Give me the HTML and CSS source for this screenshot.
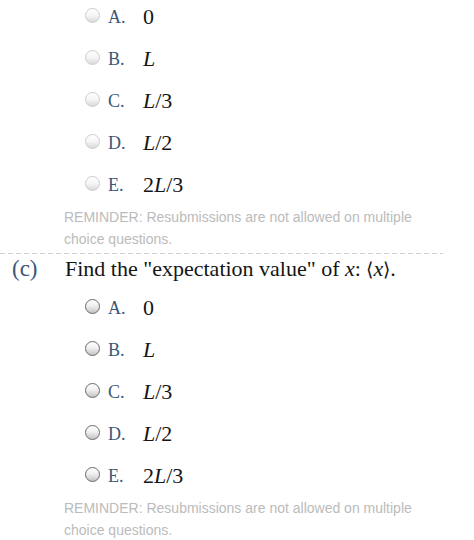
FILE: index.html
```html
<!DOCTYPE html>
<html>
<head>
<meta charset="utf-8">
<link rel="stylesheet" href="styles.css">
</head>
<body>
<div class="page">
  <ul class="choices choices-top">
    <li class="choice"><span class="radio radio-faded"></span><span class="letter">A.</span><span class="val">0</span></li>
    <li class="choice"><span class="radio radio-faded"></span><span class="letter">B.</span><span class="val"><i>L</i></span></li>
    <li class="choice"><span class="radio radio-faded"></span><span class="letter">C.</span><span class="val"><i>L</i>/3</span></li>
    <li class="choice"><span class="radio radio-faded"></span><span class="letter">D.</span><span class="val"><i>L</i>/2</span></li>
    <li class="choice"><span class="radio radio-faded"></span><span class="letter">E.</span><span class="val">2<i>L</i>/3</span></li>
  </ul>
  <p class="reminder">REMINDER: Resubmissions are not allowed on multiple choice questions.</p>
  <div class="divider"></div>
  <div class="question"><span class="qnum">(c)</span><span class="qtext">Find the "expectation value" of <i>x</i>: <span class="br">⟨</span><i>x</i><span class="br">⟩</span>.</span></div>
  <ul class="choices">
    <li class="choice"><span class="radio"></span><span class="letter">A.</span><span class="val">0</span></li>
    <li class="choice"><span class="radio"></span><span class="letter">B.</span><span class="val"><i>L</i></span></li>
    <li class="choice"><span class="radio"></span><span class="letter">C.</span><span class="val"><i>L</i>/3</span></li>
    <li class="choice"><span class="radio"></span><span class="letter">D.</span><span class="val"><i>L</i>/2</span></li>
    <li class="choice"><span class="radio"></span><span class="letter">E.</span><span class="val">2<i>L</i>/3</span></li>
  </ul>
  <p class="reminder">REMINDER: Resubmissions are not allowed on multiple choice questions.</p>
</div>
</body>
</html>
```
FILE: styles.css
```css
html, body {
  margin: 0;
  padding: 0;
  background: #ffffff;
}
.page {
  width: 474px;
  font-family: "Liberation Serif", "Times New Roman", serif;
  color: #151515;
}
.choices {
  list-style: none;
  margin: 0;
  padding: 0 0 0 85px;
}
.choices-top {
  margin-top: -4px;
}
.choice {
  height: 42px;
  display: flex;
  align-items: center;
}
.radio {
  width: 13px;
  height: 13px;
  border-radius: 50%;
  border: 1px solid #6a6a6a;
  background: linear-gradient(to bottom, #ffffff 0%, #f0f0f0 45%, #c4c4c4 100%);
  flex: none;
  margin-top: -3px;
}
.radio-faded {
  border-color: #cdcdcd;
  background: linear-gradient(to bottom, #ffffff 0%, #f5f5f5 50%, #d9d9d9 100%);
}
.letter {
  margin-left: 8px;
  width: 35px;
  font-size: 18px;
  color: #3a5878;
}
.val {
  font-size: 22px;
  color: #151515;
}
.reminder {
  margin: 0;
  padding-left: 64px;
  width: 360px;
  font-family: "Liberation Sans", Arial, sans-serif;
  font-size: 14px;
  line-height: 22px;
  color: #bbbbbb;
}
.divider {
  margin-top: 3px;
  width: 443px;
  height: 1px;
  background: repeating-linear-gradient(to right, #cfcfcf 0, #cfcfcf 5px, transparent 5px, transparent 8px);
}
.question {
  display: flex;
  align-items: center;
  height: 30px;
  margin-bottom: 3px;
  font-size: 22px;
}
.qnum {
  width: 53px;
  padding-left: 12px;
  font-size: 23px;
  color: #3a5878;
}
.qtext {
  color: #151515;
}
.br {
  font-size: 19px;
}
```
